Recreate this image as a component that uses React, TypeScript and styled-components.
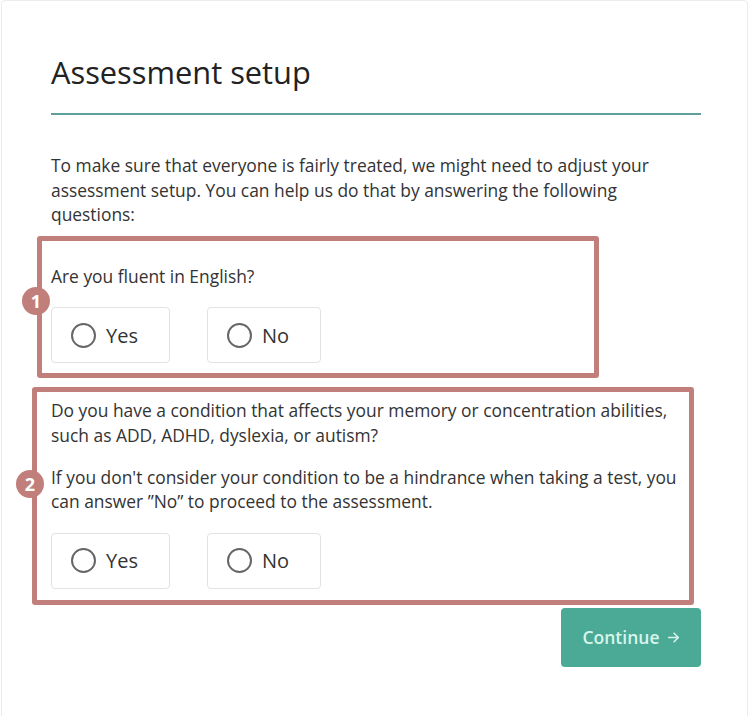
import React from "react";
import styled, { createGlobalStyle } from "styled-components";

const Global = createGlobalStyle`
  html, body { margin: 0; padding: 0; background: #ffffff; }
  body { font-family: "Open Sans", "Noto Sans", sans-serif; color: #333333; }
  * { box-sizing: border-box; }
`;

const Card = styled.div`
  margin: 0 1px;
  min-height: 740px;
  background: #ffffff;
  border: 1px solid #ececec;
  border-radius: 4px;
  padding: 52px 46px 40px 49px;
`;

const Heading = styled.h1`
  margin: 0;
  font-size: 30.8px;
  line-height: 39px;
  font-weight: 400;
  color: #222222;
  padding-bottom: 21px;
  border-bottom: 2px solid #5f9f9d;
`;

const Text = styled.p<{ $top?: number }>`
  margin: ${(p) => p.$top ?? 0}px 0 0;
  font-size: 17.4px;
  line-height: 24.5px;
  color: #333333;
`;

const Group = styled.section<{ $top: number }>`
  position: relative;
  margin-top: ${(p) => p.$top}px;
`;

const Options = styled.div`
  display: flex;
  gap: 37px;
  margin-top: 19px;
`;

const Option = styled.button`
  display: flex;
  align-items: center;
  gap: 10px;
  height: 56px;
  padding: 0 31px 0 19px;
  background: #ffffff;
  border: 1px solid #e2e2e2;
  border-radius: 4px;
  font-family: "Open Sans", "Noto Sans", sans-serif;
  font-size: 20px;
  color: #333333;
  cursor: pointer;
`;

const Radio = styled.span`
  width: 25px;
  height: 25px;
  border-radius: 50%;
  border: 2px solid #666666;
  flex: none;
`;

const Footer = styled.div`
  display: flex;
  justify-content: flex-end;
  margin-top: 19px;
`;

const Continue = styled.button`
  display: flex;
  align-items: center;
  gap: 7px;
  height: 59px;
  width: 140px;
  justify-content: center;
  background: #4aaa96;
  border: none;
  border-radius: 4px;
  color: #d8f5ec;
  font-family: "Open Sans", "Noto Sans", sans-serif;
  font-size: 17.5px;
  font-weight: 600;
  cursor: pointer;
`;

const Annotation = styled.div<{ $l: number; $t: number; $w: number; $h: number }>`
  position: absolute;
  left: ${(p) => p.$l}px;
  top: ${(p) => p.$t}px;
  width: ${(p) => p.$w}px;
  height: ${(p) => p.$h}px;
  border: 5px solid #c17f7c;
  border-radius: 3px;
  pointer-events: none;
`;

const Badge = styled.span<{ $l: number; $t: number }>`
  position: absolute;
  left: ${(p) => p.$l}px;
  top: ${(p) => p.$t}px;
  width: 28px;
  height: 28px;
  border-radius: 50%;
  background: #c17f7c;
  color: #ffffff;
  font-family: "Open Sans", "Noto Sans", sans-serif;
  font-weight: 700;
  font-size: 18px;
  line-height: 28px;
  text-align: center;
`;

function Choice({ label }: { label: string }) {
  return (
    <Option type="button">
      <Radio />
      {label}
    </Option>
  );
}

export default function App() {
  return (
    <>
      <Global />
      <Card>
        <Heading>Assessment setup</Heading>
        <Text $top={38}>
          To make sure that everyone is fairly treated, we might need to adjust your
          assessment setup. You can help us do that by answering the following
          questions:
        </Text>
        <Group $top={37}>
          <Text>Are you fluent in English?</Text>
          <Options>
            <Choice label="Yes" />
            <Choice label="No" />
          </Options>
          <Annotation $l={-14} $t={-28} $w={562} $h={142} />
          <Badge $l={-29} $t={23}>1</Badge>
        </Group>
        <Group $top={35}>
          <Text>
            Do you have a condition that affects your memory or concentration abilities,
            such as ADD, ADHD, dyslexia, or autism?
          </Text>
          <Text $top={17.5}>
            If you don't consider your condition to be a hindrance when taking a test, you
            can answer ”No” to proceed to the assessment.
          </Text>
          <Options>
            <Choice label="Yes" />
            <Choice label="No" />
          </Options>
          <Annotation $l={-19} $t={-11} $w={662} $h={218} />
          <Badge $l={-35} $t={72}>2</Badge>
        </Group>
        <Footer>
          <Continue type="button">
            Continue
            <svg width="13" height="13" viewBox="0 0 12 12" fill="none" stroke="currentColor" strokeWidth="1.4" strokeLinecap="round" strokeLinejoin="round">
              <path d="M1.5 6h9M6.5 2l4 4-4 4" />
            </svg>
          </Continue>
        </Footer>
      </Card>
    </>
  );
}
